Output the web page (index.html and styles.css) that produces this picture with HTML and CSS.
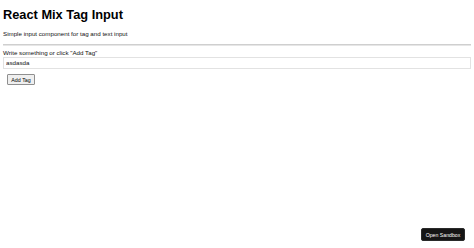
FILE: index.html
```html
<!DOCTYPE html>
<html lang="en">
<head>
<meta charset="utf-8">
<title>React Mix Tag Input</title>
<link rel="stylesheet" href="styles.css">
</head>
<body>
<div class="page">
  <h1 class="title">React Mix Tag Input</h1>
  <p class="subtitle">Simple input component for tag and text input</p>
  <hr class="rule">
  <label class="field-label" for="mix">Write something or click "Add Tag"</label>
  <input id="mix" class="mix-input" type="text" value="asdasda">
  <button class="add-btn" type="button">Add Tag</button>
</div>
<a class="sandbox-btn" href="#">Open Sandbox</a>
</body>
</html>
```

FILE: styles.css
```css
html, body {
  margin: 0;
  padding: 0;
  background: #ffffff;
}
body {
  font-family: "Liberation Sans", Arial, sans-serif;
  color: #000;
  width: 474px;
  height: 248px;
  overflow: hidden;
}
.page {
  padding: 0 3px;
  display: flex;
  flex-direction: column;
  align-items: stretch;
}
.title {
  font-size: 12.8px;
  line-height: 15px;
  font-weight: bold;
  margin: 7px 0 0 0;
}
.subtitle {
  font-size: 6.2px;
  line-height: 7.4px;
  margin: 8.4px 0 0 0;
  color: #111;
}
.rule {
  margin: 6.5px 0 0 0;
  height: 0;
  border: 0;
  border-top: 1px solid #cfcfcf;
  border-bottom: 1px solid #e6e6e6;
}
.field-label {
  font-size: 6.2px;
  line-height: 7.4px;
  margin-top: 2.3px;
  color: #111;
}
.mix-input {
  box-sizing: border-box;
  margin: 0.5px 0 0 0;
  height: 12.5px;
  width: 100%;
  border: 1px solid #e2e2e2;
  padding: 0 2px;
  font-family: "Liberation Sans", Arial, sans-serif;
  font-size: 6.2px;
  color: #111;
  outline: none;
  background: #fff;
}
.add-btn {
  align-self: flex-start;
  box-sizing: border-box;
  margin: 5px 0 0 4px;
  height: 11px;
  width: 28px;
  padding: 0;
  font-family: "Liberation Sans", Arial, sans-serif;
  font-size: 5.3px;
  color: #000;
  background: #efefef;
  border: 1px solid #8f8f8f;
  border-radius: 1px;
}
.sandbox-btn {
  position: fixed;
  right: 9px;
  bottom: 7px;
  width: 44px;
  height: 13px;
  box-sizing: border-box;
  display: flex;
  align-items: center;
  justify-content: center;
  background: #151515;
  color: #fff;
  font-size: 5.2px;
  text-decoration: none;
  border-radius: 2px;
  border: 1px solid #2a2a2a;
}
```
